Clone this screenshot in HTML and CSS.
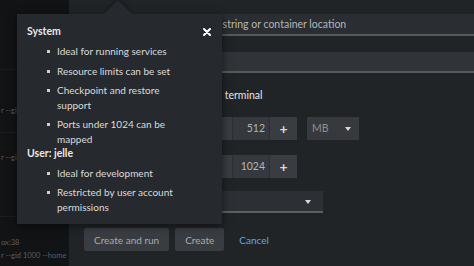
FILE: index.html
```html
<!DOCTYPE html>
<html lang="en">
<head>
  <meta charset="UTF-8">
  <title>Create container</title>
  <meta name="viewport" content="width=device-width, initial-scale=1.0">
  <link rel="stylesheet" href="styles.css">
</head>
<body>
  <div class="screen">
    <aside class="terminal">
      <div class="term-block first"></div>
      <div class="term-block second"><span>r --gi</span></div>
      <div class="term-block third"><span>r --gi</span></div>
      <div class="term-block last">
        <span>ox:38</span>
        <span>r --gid 1000 --home</span>
      </div>
    </aside>

    <main class="modal">
      <div class="form">
        <div class="row row-image">
          <label></label>
          <div class="text-input">Search string or container location</div>
        </div>
        <div class="row row-command">
          <label></label>
          <div class="text-input light"></div>
        </div>
        <div class="row row-terminal">
          <label></label>
          <div class="check-line">
            <span class="checkbox"></span>
            <span class="check-label">With terminal</span>
          </div>
        </div>
        <div class="row row-memory">
          <label></label>
          <div class="control-line">
            <span class="checkbox"></span>
            <div class="number">
              <button class="num-btn">&minus;</button>
              <span class="num-value">512</span>
              <button class="num-btn">+</button>
            </div>
            <div class="unit-select">MB <span class="caret"></span></div>
          </div>
        </div>
        <div class="row row-cpu">
          <label></label>
          <div class="control-line">
            <span class="checkbox"></span>
            <div class="number">
              <button class="num-btn">&minus;</button>
              <span class="num-value">1024</span>
              <button class="num-btn">+</button>
            </div>
          </div>
        </div>
        <div class="row row-restart">
          <label></label>
          <div class="select"><span class="caret"></span></div>
        </div>
      </div>

      <div class="footer">
        <button class="btn">Create and run</button>
        <button class="btn">Create</button>
        <button class="link">Cancel</button>
      </div>
    </main>
  </div>

  <div class="popover">
    <div class="arrow"><span></span></div>
    <div class="pop-head">
      <h3>System</h3>
      <button class="close" aria-label="Close">
        <svg width="8" height="8" viewBox="0 0 8 8"><path d="M1 1L7 7M7 1L1 7" stroke="#fff" stroke-width="2" stroke-linecap="round"/></svg>
      </button>
    </div>
    <ul>
      <li>Ideal for running services</li>
      <li>Resource limits can be set</li>
      <li>Checkpoint and restore support</li>
      <li>Ports under 1024 can be mapped</li>
    </ul>
    <h3>User: jelle</h3>
    <ul>
      <li>Ideal for development</li>
      <li>Restricted by user account permissions</li>
    </ul>
  </div>
</body>
</html>
```

FILE: styles.css
```css
* { box-sizing: border-box; }

body {
  margin: 0;
  height: 266px;
  overflow: hidden;
  font-family: 'Lato', 'Open Sans', sans-serif;
  font-size: 10px;
  color: #e0e0e0;
  background-color: #131415;
}

.screen {
  display: flex;
  height: 266px;
}

/* terminal behind the dialog */
.terminal {
  width: 69px;
  flex-shrink: 0;
  background-color: #121314;
  color: #5c5e60;
  font-size: 7.5px;
  white-space: nowrap;
}

.term-block {
  border-bottom: 1px solid #1b1c1e;
  padding-left: 1px;
}

.term-block.first { height: 70px; }
.term-block.second { height: 63px; padding-top: 34px; }
.term-block.third { height: 84px; padding-top: 18px; }
.term-block.last { border: none; padding-top: 19px; }

.term-block span {
  display: block;
  line-height: 13px;
}

/* dialog */
.modal {
  flex: 1;
  background-color: #212427;
  padding: 14px 0 0 15px;
}

.row {
  display: grid;
  grid-template-columns: 88px 1fr;
  column-gap: 8px;
  align-items: center;
}

.row-command { margin-top: 16px; }
.row-terminal { margin-top: 14px; }
.row-memory { margin-top: 14px; }
.row-cpu { margin-top: 15px; }
.row-restart { margin-top: 13px; }

.text-input {
  height: 22px;
  line-height: 20px;
  padding-left: 9px;
  background-color: #2a2d31;
  border-bottom: 2px solid #55585c;
  color: #b4b6b8;
  font-size: 10.5px;
  white-space: nowrap;
  overflow: hidden;
}

.text-input.light {
  height: 21px;
  background-color: #303337;
}

.check-line,
.control-line {
  display: flex;
  align-items: center;
}

.check-line { height: 16px; }

.checkbox {
  width: 13px;
  height: 13px;
  border: 1px solid #6a6e73;
  border-radius: 2px;
  background-color: #2a2d31;
  margin-right: 6px;
}

.check-label {
  font-size: 10.5px;
  color: #e6e6e6;
}

.control-line .checkbox { margin-right: 12px; }

.number {
  display: flex;
  height: 23px;
}

.num-btn {
  width: 27px;
  border: none;
  background-color: #393c40;
  color: #d8d8d8;
  font-family: inherit;
  font-size: 14px;
  font-weight: bold;
  padding: 0;
}

.num-value {
  width: 38px;
  background-color: #35383c;
  border-left: 1px solid #2c2f33;
  border-right: 1px solid #2c2f33;
  text-align: right;
  padding-right: 4px;
  line-height: 23px;
  color: #b4b6b8;
  font-size: 10.5px;
}

.unit-select {
  margin-left: 10px;
  width: 52px;
  height: 23px;
  line-height: 23px;
  padding-left: 5px;
  background-color: #37393d;
  color: #8d9093;
  font-size: 10.5px;
  position: relative;
}

.caret {
  position: absolute;
  top: 10px;
  width: 0;
  height: 0;
  border-left: 3.5px solid transparent;
  border-right: 3.5px solid transparent;
  border-top: 4px solid #d8d8d8;
}

.unit-select .caret { left: 38px; }

.select {
  width: 143px;
  height: 22px;
  background-color: #2c2f33;
  border-bottom: 2px solid #5b5e62;
  position: relative;
}

.select .caret { left: 125px; top: 9px; }

.footer {
  margin-top: 15px;
  display: flex;
  align-items: center;
  gap: 6px;
}

.btn {
  height: 23px;
  padding: 0 10px;
  border: none;
  border-radius: 2px;
  background-color: #393c40;
  color: #a9abae;
  font-family: inherit;
  font-size: 10px;
}

.link {
  border: none;
  background: none;
  padding: 0 9px;
  color: #5aa9e6;
  font-family: inherit;
  font-size: 10px;
}

/* popover over the dialog */
.popover {
  position: absolute;
  left: 17px;
  top: 14px;
  width: 205px;
  padding: 10px 10px 10px 10px;
  background-color: #26292d;
  box-shadow: 0 2px 8px rgba(0, 0, 0, 0.55);
  line-height: 14.5px;
}

.arrow {
  position: absolute;
  top: -14px;
  left: 87px;
  width: 28px;
  height: 14px;
  overflow: hidden;
}

.arrow span {
  position: absolute;
  left: 4px;
  top: 4px;
  width: 20px;
  height: 20px;
  background-color: #26292d;
  box-shadow: 0 0 4px rgba(0, 0, 0, 0.5);
  transform: rotate(45deg);
}

.pop-head {
  display: flex;
  justify-content: space-between;
  align-items: center;
  height: 15px;
}

.popover h3 {
  margin: 0;
  font-size: 10.5px;
  font-weight: bold;
  color: #e8e8e8;
}

.close {
  border: none;
  background: none;
  padding: 0;
  margin-right: 1px;
  display: flex;
}

.popover ul {
  list-style: none;
  margin: 5px 0 0 0;
  padding: 0 0 0 30px;
  width: 155px;
}

.popover li {
  position: relative;
  margin-bottom: 5px;
  color: #dcdcdc;
  font-size: 10px;
}

.popover li:last-child { margin-bottom: 0; }

.popover li::before {
  content: "";
  position: absolute;
  left: -10px;
  top: 6px;
  width: 3px;
  height: 3px;
  background-color: #cfcfcf;
}
```
